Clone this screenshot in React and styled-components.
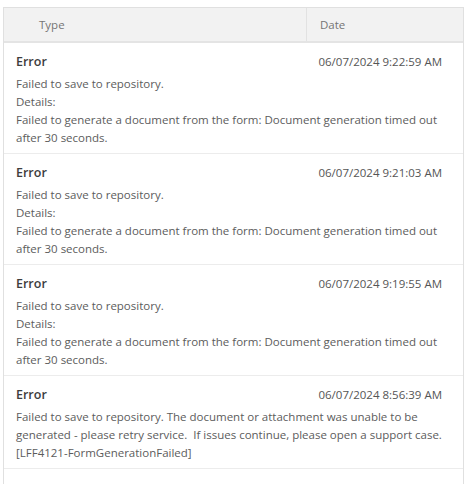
import React from 'react'
import styled, { createGlobalStyle } from 'styled-components'

const GlobalStyle = createGlobalStyle`
  body {
    margin: 0;
    background: #ffffff;
    font-family: "Open Sans", "Noto Sans", sans-serif;
  }
  * {
    box-sizing: border-box;
  }
`

const entries = [
  {
    date: '06/07/2024 9:22:59 AM',
    lines: [
      'Failed to save to repository.',
      'Details:',
      'Failed to generate a document from the form: Document generation timed out after 30 seconds.',
    ],
  },
  {
    date: '06/07/2024 9:21:03 AM',
    lines: [
      'Failed to save to repository.',
      'Details:',
      'Failed to generate a document from the form: Document generation timed out after 30 seconds.',
    ],
  },
  {
    date: '06/07/2024 9:19:55 AM',
    lines: [
      'Failed to save to repository.',
      'Details:',
      'Failed to generate a document from the form: Document generation timed out after 30 seconds.',
    ],
  },
  {
    date: '06/07/2024 8:56:39 AM',
    lines: [
      'Failed to save to repository. The document or attachment was unable to be generated - please retry service.\u00a0 If issues continue, please open a support case. [LFF4121-FormGenerationFailed]',
    ],
  },
]

export default function App() {
  return (
    <>
      <GlobalStyle />
      <Table>
        <Header>
          <HeadCell width="303px" pad="35px">Type</HeadCell>
          <HeadCell pad="13px" last>Date</HeadCell>
        </Header>
        {entries.map((e, i) => (
          <Row key={i}>
            <TopLine>
              <Title>Error</Title>
              <Stamp>{e.date}</Stamp>
            </TopLine>
            {e.lines.map((l, j) => (
              <Line key={j}>{l}</Line>
            ))}
          </Row>
        ))}
        <Filler />
      </Table>
    </>
  )
}

const Table = styled.div`
  margin: 7px 0 0 3px;
  width: 461px;
  border: 1px solid #e0e0e0;
  border-bottom: none;
`

const Header = styled.div`
  display: flex;
  height: 35px;
  background-color: #f2f2f2;
  border-bottom: 2px solid #e4e4e4;
`

const HeadCell = styled.div`
  display: flex;
  align-items: center;
  width: ${(p) => p.width || 'auto'};
  flex: ${(p) => (p.last ? 1 : 'none')};
  padding-left: ${(p) => p.pad};
  font-size: 11.5px;
  color: #757575;
  border-right: ${(p) => (p.last ? 'none' : '1px solid #e2e2e2')};
`

const Row = styled.div`
  padding: 9px 21px 6px 12px;
  border-bottom: 1px solid #ececec;
`

const TopLine = styled.div`
  display: flex;
  justify-content: space-between;
  align-items: center;
  height: 18px;
  margin-bottom: 5px;
`

const Title = styled.div`
  font-size: 12.5px;
  font-weight: 600;
  color: #3d3d3d;
`

const Stamp = styled.div`
  font-size: 11.5px;
  color: #555;
`

const Line = styled.div`
  font-size: 11.5px;
  line-height: 18px;
  color: #5c5c5c;
`

const Filler = styled.div`
  height: 20px;
`
